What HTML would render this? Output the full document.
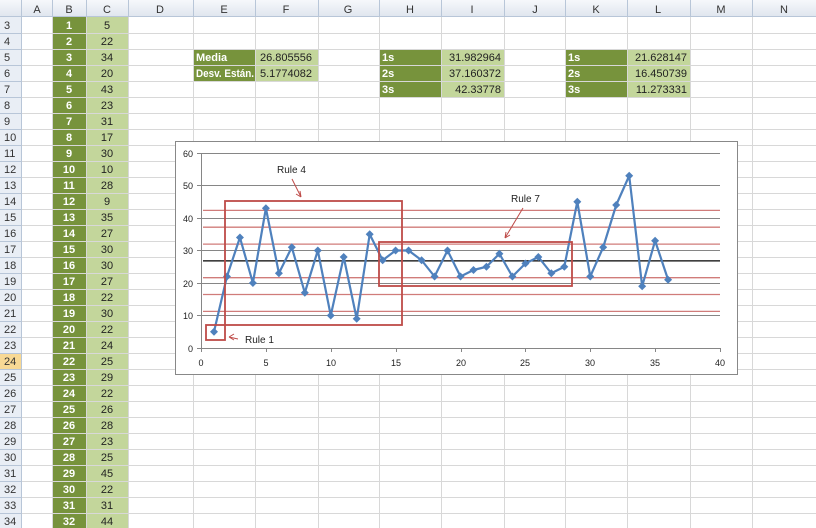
<!DOCTYPE html>
<html><head><meta charset="utf-8"><style>
html,body{margin:0;padding:0;background:#fff;}
svg{display:block;font-family:"Liberation Sans",sans-serif;}
</style></head><body>
<svg width="816" height="528" viewBox="0 0 816 528" xmlns="http://www.w3.org/2000/svg">
<rect width="816" height="528" fill="#fff"/>
<rect x="52" y="17" width="34" height="511" fill="#77933c"/>
<rect x="86" y="17" width="42" height="511" fill="#c3d69b"/>
<rect x="193" y="49" width="62" height="32" fill="#77933c"/>
<rect x="255" y="49" width="63" height="32" fill="#c3d69b"/>
<rect x="379" y="49" width="62" height="48" fill="#77933c"/>
<rect x="441" y="49" width="63" height="48" fill="#c3d69b"/>
<rect x="565" y="49" width="62" height="48" fill="#77933c"/>
<rect x="627" y="49" width="63" height="48" fill="#c3d69b"/>
<g stroke="#d8d8d8" stroke-width="1">
<path d="M22 33.5H816M22 49.5H816M22 65.5H816M22 81.5H816M22 97.5H816M22 113.5H816M22 129.5H816M22 145.5H816M22 161.5H816M22 177.5H816M22 193.5H816M22 209.5H816M22 225.5H816M22 241.5H816M22 257.5H816M22 273.5H816M22 289.5H816M22 305.5H816M22 321.5H816M22 337.5H816M22 353.5H816M22 369.5H816M22 385.5H816M22 401.5H816M22 417.5H816M22 433.5H816M22 449.5H816M22 465.5H816M22 481.5H816M22 497.5H816M22 513.5H816"/>
<path d="M52.5 17V528M86.5 17V528M128.5 17V528M193.5 17V528M255.5 17V528M318.5 17V528M379.5 17V528M441.5 17V528M504.5 17V528M565.5 17V528M627.5 17V528M690.5 17V528M752.5 17V528"/>
</g>
<defs><linearGradient id="hg" x1="0" y1="0" x2="0" y2="1"><stop offset="0" stop-color="#f6f8fb"/><stop offset="1" stop-color="#dfe5ee"/></linearGradient></defs>
<rect x="0" y="0" width="816" height="17" fill="url(#hg)"/>
<rect x="0" y="17" width="22" height="511" fill="#e9eef5"/>
<rect x="0" y="353" width="22" height="16" fill="#f8d995"/>
<g stroke="#b8c6d8"><path d="M0 16.5H816M21.5 0V528"/>
<path d="M52.5 0V17M86.5 0V17M128.5 0V17M193.5 0V17M255.5 0V17M318.5 0V17M379.5 0V17M441.5 0V17M504.5 0V17M565.5 0V17M627.5 0V17M690.5 0V17M752.5 0V17"/>
<path d="M0 33.5H22M0 49.5H22M0 65.5H22M0 81.5H22M0 97.5H22M0 113.5H22M0 129.5H22M0 145.5H22M0 161.5H22M0 177.5H22M0 193.5H22M0 209.5H22M0 225.5H22M0 241.5H22M0 257.5H22M0 273.5H22M0 289.5H22M0 305.5H22M0 321.5H22M0 337.5H22M0 353.5H22M0 369.5H22M0 385.5H22M0 401.5H22M0 417.5H22M0 433.5H22M0 449.5H22M0 465.5H22M0 481.5H22M0 497.5H22M0 513.5H22"/></g>
<g font-size="11" fill="#333" text-anchor="middle">
<text x="37" y="13">A</text><text x="69" y="13">B</text><text x="107" y="13">C</text><text x="160" y="13">D</text><text x="224" y="13">E</text><text x="286" y="13">F</text><text x="348" y="13">G</text><text x="410" y="13">H</text><text x="472" y="13">I</text><text x="535" y="13">J</text><text x="596" y="13">K</text><text x="658" y="13">L</text><text x="721" y="13">M</text><text x="784" y="13">N</text>
</g>
<g font-size="11" fill="#333">
<text x="4" y="29">3</text><text x="4" y="45">4</text><text x="4" y="61">5</text><text x="4" y="77">6</text><text x="4" y="93">7</text><text x="4" y="109">8</text><text x="4" y="125">9</text><text x="4" y="141">10</text><text x="4" y="157">11</text><text x="4" y="173">12</text><text x="4" y="189">13</text><text x="4" y="205">14</text><text x="4" y="221">15</text><text x="4" y="237">16</text><text x="4" y="253">17</text><text x="4" y="269">18</text><text x="4" y="285">19</text><text x="4" y="301">20</text><text x="4" y="317">21</text><text x="4" y="333">22</text><text x="4" y="349">23</text><text x="4" y="365">24</text><text x="4" y="381">25</text><text x="4" y="397">26</text><text x="4" y="413">27</text><text x="4" y="429">28</text><text x="4" y="445">29</text><text x="4" y="461">30</text><text x="4" y="477">31</text><text x="4" y="493">32</text><text x="4" y="509">33</text><text x="4" y="525">34</text>
</g>
<g font-size="11" fill="#fff" font-weight="bold" text-anchor="middle">
<text x="69" y="29">1</text><text x="69" y="45">2</text><text x="69" y="61">3</text><text x="69" y="77">4</text><text x="69" y="93">5</text><text x="69" y="109">6</text><text x="69" y="125">7</text><text x="69" y="141">8</text><text x="69" y="157">9</text><text x="69" y="173">10</text><text x="69" y="189">11</text><text x="69" y="205">12</text><text x="69" y="221">13</text><text x="69" y="237">14</text><text x="69" y="253">15</text><text x="69" y="269">16</text><text x="69" y="285">17</text><text x="69" y="301">18</text><text x="69" y="317">19</text><text x="69" y="333">20</text><text x="69" y="349">21</text><text x="69" y="365">22</text><text x="69" y="381">23</text><text x="69" y="397">24</text><text x="69" y="413">25</text><text x="69" y="429">26</text><text x="69" y="445">27</text><text x="69" y="461">28</text><text x="69" y="477">29</text><text x="69" y="493">30</text><text x="69" y="509">31</text><text x="69" y="525">32</text>
</g>
<g font-size="11" fill="#222" text-anchor="middle">
<text x="107" y="29">5</text><text x="107" y="45">22</text><text x="107" y="61">34</text><text x="107" y="77">20</text><text x="107" y="93">43</text><text x="107" y="109">23</text><text x="107" y="125">31</text><text x="107" y="141">17</text><text x="107" y="157">30</text><text x="107" y="173">10</text><text x="107" y="189">28</text><text x="107" y="205">9</text><text x="107" y="221">35</text><text x="107" y="237">27</text><text x="107" y="253">30</text><text x="107" y="269">30</text><text x="107" y="285">27</text><text x="107" y="301">22</text><text x="107" y="317">30</text><text x="107" y="333">22</text><text x="107" y="349">24</text><text x="107" y="365">25</text><text x="107" y="381">29</text><text x="107" y="397">22</text><text x="107" y="413">26</text><text x="107" y="429">28</text><text x="107" y="445">23</text><text x="107" y="461">25</text><text x="107" y="477">45</text><text x="107" y="493">22</text><text x="107" y="509">31</text><text x="107" y="525">44</text>
</g>
<g font-size="11" fill="#fff" font-weight="bold">
<text x="196" y="61">Media</text><text x="196" y="77" textLength="58" lengthAdjust="spacingAndGlyphs">Desv. Están.</text>
<text x="382" y="61">1s</text><text x="382" y="77">2s</text><text x="382" y="93">3s</text>
<text x="568" y="61">1s</text><text x="568" y="77">2s</text><text x="568" y="93">3s</text>
</g>
<g font-size="11" fill="#222">
<text x="260" y="61">26.805556</text><text x="260" y="77">5.1774082</text>
</g>
<g font-size="11" fill="#222" text-anchor="end">
<text x="501" y="61">31.982964</text><text x="501" y="77">37.160372</text><text x="501" y="93">42.33778</text>
<text x="687" y="61">21.628147</text><text x="687" y="77">16.450739</text><text x="687" y="93">11.273331</text>
</g>
<rect x="175.5" y="141.5" width="562" height="233" fill="#fff" stroke="#888"/>
<g stroke="#868686" stroke-width="1">
<path d="M201 153.5H720M201 185.5H720M201 218.5H720M201 250.5H720M201 283.5H720M201 315.5H720M201 348.5H720"/>
<path d="M201.5 153V348"/>
<path d="M197 153.5H201M197 185.5H201M197 218.5H201M197 250.5H201M197 283.5H201M197 315.5H201M197 348.5H201"/>
<path d="M201.5 348V352M266.5 348V352M331.5 348V352M396.5 348V352M461.5 348V352M525.5 348V352M590.5 348V352M655.5 348V352M720.5 348V352"/>
</g>
<g stroke="#c0504d" stroke-opacity="0.75" stroke-width="1.3">
<path d="M203 210.4H720M203 227.2H720M203 244.1H720M203 277.7H720M203 294.5H720M203 311.4H720"/>
</g>
<path d="M203 260.9H720" stroke="#000" stroke-width="1.2"/>
<g font-size="9" fill="#222" text-anchor="end">
<text x="193" y="157">60</text><text x="193" y="189">50</text><text x="193" y="222">40</text><text x="193" y="254">30</text><text x="193" y="287">20</text><text x="193" y="319">10</text><text x="193" y="352">0</text>
</g>
<g font-size="9" fill="#222" text-anchor="middle">
<text x="201" y="366">0</text><text x="266" y="366">5</text><text x="331" y="366">10</text><text x="396" y="366">15</text><text x="461" y="366">20</text><text x="525" y="366">25</text><text x="590" y="366">30</text><text x="655" y="366">35</text><text x="720" y="366">40</text>
</g>
<polyline fill="none" stroke="#4f81bd" stroke-width="2.2" stroke-linejoin="round" points="214,331.75 226.95,276.5 239.93,237.5 252.9,283 265.9,208.25 278.9,273.25 291.8,247.25 304.8,292.75 317.8,250.5 330.75,315.5 343.7,257 356.7,318.75 369.7,234.25 382.65,260.25 395.6,250.5 408.6,250.5 421.6,260.25 434.55,276.5 447.5,250.5 460.5,276.5 473.5,270 486.45,266.75 499.4,253.75 512.4,276.5 525.4,263.5 538.35,257 551.3,273.25 564.3,266.75 577.3,201.75 590.25,276.5 603.2,247.25 616.2,205 629.2,175.75 642.15,286.25 655.1,240.75 668.1,279.75"/>
<g fill="#4f81bd">
<path d="M214 327.75l4 4-4 4-4-4z"/><path d="M226.95 272.5l4 4-4 4-4-4z"/><path d="M239.93 233.5l4 4-4 4-4-4z"/><path d="M252.9 279l4 4-4 4-4-4z"/><path d="M265.9 204.25l4 4-4 4-4-4z"/><path d="M278.9 269.25l4 4-4 4-4-4z"/><path d="M291.8 243.25l4 4-4 4-4-4z"/><path d="M304.8 288.75l4 4-4 4-4-4z"/><path d="M317.8 246.5l4 4-4 4-4-4z"/><path d="M330.75 311.5l4 4-4 4-4-4z"/><path d="M343.7 253l4 4-4 4-4-4z"/><path d="M356.7 314.75l4 4-4 4-4-4z"/><path d="M369.7 230.25l4 4-4 4-4-4z"/><path d="M382.65 256.25l4 4-4 4-4-4z"/><path d="M395.6 246.5l4 4-4 4-4-4z"/><path d="M408.6 246.5l4 4-4 4-4-4z"/><path d="M421.6 256.25l4 4-4 4-4-4z"/><path d="M434.55 272.5l4 4-4 4-4-4z"/><path d="M447.5 246.5l4 4-4 4-4-4z"/><path d="M460.5 272.5l4 4-4 4-4-4z"/><path d="M473.5 266l4 4-4 4-4-4z"/><path d="M486.45 262.75l4 4-4 4-4-4z"/><path d="M499.4 249.75l4 4-4 4-4-4z"/><path d="M512.4 272.5l4 4-4 4-4-4z"/><path d="M525.4 259.5l4 4-4 4-4-4z"/><path d="M538.35 253l4 4-4 4-4-4z"/><path d="M551.3 269.25l4 4-4 4-4-4z"/><path d="M564.3 262.75l4 4-4 4-4-4z"/><path d="M577.3 197.75l4 4-4 4-4-4z"/><path d="M590.25 272.5l4 4-4 4-4-4z"/><path d="M603.2 243.25l4 4-4 4-4-4z"/><path d="M616.2 201l4 4-4 4-4-4z"/><path d="M629.2 171.75l4 4-4 4-4-4z"/><path d="M642.15 282.25l4 4-4 4-4-4z"/><path d="M655.1 236.75l4 4-4 4-4-4z"/><path d="M668.1 275.75l4 4-4 4-4-4z"/>
</g>
<g fill="none" stroke="#be4b48" stroke-width="1.8">
<rect x="206" y="325" width="19" height="15"/>
<rect x="225" y="201" width="177" height="124"/>
<rect x="379" y="242" width="193" height="44"/>
</g>
<g fill="none" stroke="#be4b48" stroke-width="1">
<path d="M292 179L301 197M301 197l-1-6M301 197l-5-3"/>
<path d="M523 208L505 238M505 238l1-6M505 238l5-3"/>
<path d="M238 339L229 337M229 337l5-3M229 337l5 3"/>
</g>
<g font-size="10" fill="#222">
<text x="277" y="173">Rule 4</text>
<text x="511" y="202">Rule 7</text>
<text x="245" y="343">Rule 1</text>
</g>
</svg>
</body></html>
